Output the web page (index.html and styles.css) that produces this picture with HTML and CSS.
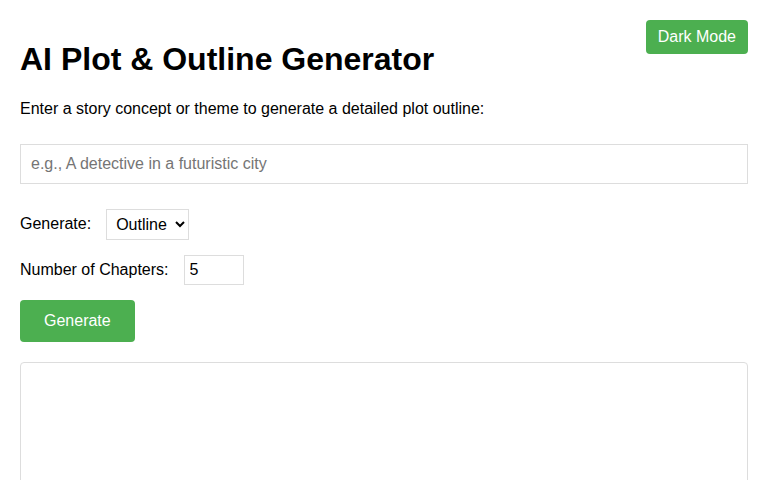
FILE: index.html
```html
<!DOCTYPE html>
<html lang="en">
<head>
<meta charset="utf-8">
<title>AI Plot &amp; Outline Generator</title>
<link rel="stylesheet" href="styles.css">
</head>
<body>
<button class="theme-toggle">Dark Mode</button>
<h1 class="title">AI Plot &amp; Outline Generator</h1>
<p class="intro">Enter a story concept or theme to generate a detailed plot outline:</p>
<input class="concept" type="text" placeholder="e.g., A detective in a futuristic city">
<div class="row">
  <label class="row-label" for="mode">Generate:</label>
  <select id="mode" class="mode-select">
    <option>Outline</option>
    <option>Plot</option>
  </select>
</div>
<div class="row">
  <label class="row-label" for="chapters">Number of Chapters:</label>
  <input id="chapters" class="chapters" type="number" value="5">
</div>
<button class="generate">Generate</button>
<div class="output"></div>
</body>
</html>
```
FILE: styles.css
```css
html, body {
  background: #fff;
}
body {
  margin: 0;
  padding: 20px;
  font-family: "Liberation Sans", Arial, sans-serif;
  font-size: 16px;
  color: #000;
}
.theme-toggle {
  position: absolute;
  top: 20px;
  right: 20px;
  background: #4caf50;
  color: #fff;
  border: none;
  border-radius: 4px;
  padding: 8px 12px;
  font-family: inherit;
  font-size: 16px;
  line-height: 18px;
  cursor: pointer;
}
.title {
  font-size: 32px;
  font-weight: bold;
  margin: 21.44px 0;
  line-height: 37px;
}
.intro {
  margin: 0 0 26px;
  line-height: 18px;
}
.concept {
  display: block;
  box-sizing: border-box;
  width: 100%;
  height: 40px;
  padding: 10px;
  margin: 0 0 25px;
  border: 1px solid #ddd;
  border-radius: 0;
  font-family: inherit;
  font-size: 16px;
  outline: none;
}
.concept::placeholder {
  color: #757575;
}
.row {
  display: flex;
  align-items: center;
  margin-bottom: 15px;
}
.row-label {
  margin-right: 15px;
}
.mode-select {
  box-sizing: border-box;
  height: 31px;
  padding: 5px;
  border: 1px solid #ddd;
  border-radius: 0;
  background: #fff;
  font-family: inherit;
  font-size: 16px;
  color: #000;
}
.chapters {
  box-sizing: border-box;
  width: 60px;
  height: 30px;
  padding: 5px;
  border: 1px solid #ddd;
  border-radius: 0;
  font-family: inherit;
  font-size: 16px;
}
.generate {
  display: block;
  background: #4caf50;
  color: #fff;
  border: none;
  border-radius: 4px;
  padding: 12px 24px;
  font-family: inherit;
  font-size: 16px;
  line-height: 18px;
  cursor: pointer;
}
.output {
  margin-top: 20px;
  min-height: 200px;
  border: 1px solid #ddd;
  border-radius: 4px;
  padding: 15px;
}
```
